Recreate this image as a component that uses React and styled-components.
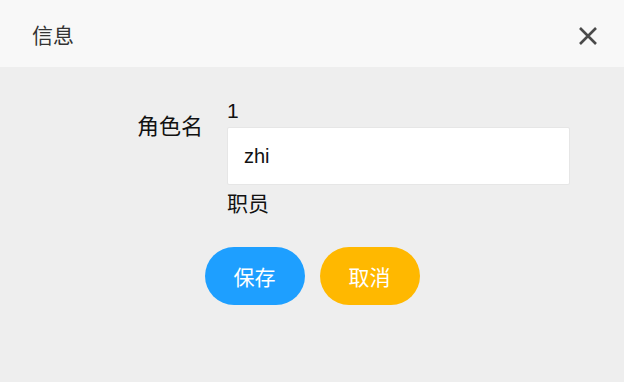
import styled, { createGlobalStyle } from "styled-components";

const GlobalStyle = createGlobalStyle`
  html, body, #root {
    margin: 0;
    height: 100%;
  }
  body {
    font-family: "Liberation Sans", "Noto Sans CJK SC", sans-serif;
    background: #eeeeee;
  }
`;

const Dialog = styled.div`
  display: flex;
  flex-direction: column;
  height: 100%;
  background: #eeeeee;
`;

const Header = styled.div`
  height: 67px;
  flex-shrink: 0;
  display: flex;
  align-items: center;
  justify-content: space-between;
  padding: 0 26px 0 32px;
  background: #f8f8f8;
`;

const Title = styled.span`
  font-size: 21px;
  color: #333;
`;

const Close = styled.button`
  border: 0;
  background: none;
  padding: 0;
  margin-top: 4px;
  width: 20px;
  height: 20px;
  display: flex;
  cursor: pointer;
`;

const Body = styled.div`
  padding-top: 31px;
`;

const Row = styled.div`
  display: flex;
  gap: 24px;
`;

const Label = styled.label`
  width: 203px;
  text-align: right;
  font-size: 22px;
  line-height: 30px;
  margin-top: 14px;
  color: #111;
`;

const Field = styled.div`
  width: 343px;
  display: flex;
  flex-direction: column;
`;

const Text = styled.div`
  font-size: 21px;
  line-height: 26px;
  color: #111;
  margin-top: ${(p) => p.$top || 0}px;
`;

const Input = styled.input`
  box-sizing: border-box;
  margin-top: 3px;
  height: 58px;
  width: 100%;
  border: 1px solid #e6e6e6;
  border-radius: 2px;
  background: #fff;
  padding: 0 16px;
  font-family: inherit;
  font-size: 20px;
  color: #111;
  outline: none;
`;

const Buttons = styled.div`
  display: flex;
  justify-content: center;
  gap: 15px;
  margin-top: 30px;
`;

const Button = styled.button`
  width: 100px;
  height: 58px;
  border: 0;
  border-radius: 29px;
  background: ${(p) => p.$color};
  color: #fff;
  font-family: inherit;
  font-size: 21px;
  cursor: pointer;
`;

export default function App() {
  return (
    <Dialog>
      <GlobalStyle />
      <Header>
        <Title>信息</Title>
        <Close aria-label="关闭">
          <svg width="20" height="20" viewBox="0 0 20 20">
            <path d="M2 2 L18 18 M18 2 L2 18" stroke="#4a4a4a" strokeWidth="2.6" fill="none" />
          </svg>
        </Close>
      </Header>
      <Body>
        <Row>
          <Label>角色名</Label>
          <Field>
            <Text>1</Text>
            <Input defaultValue="zhi" />
            <Text $top={6}>职员</Text>
          </Field>
        </Row>
        <Buttons>
          <Button $color="#1E9FFF">保存</Button>
          <Button $color="#FFB800">取消</Button>
        </Buttons>
      </Body>
    </Dialog>
  );
}
